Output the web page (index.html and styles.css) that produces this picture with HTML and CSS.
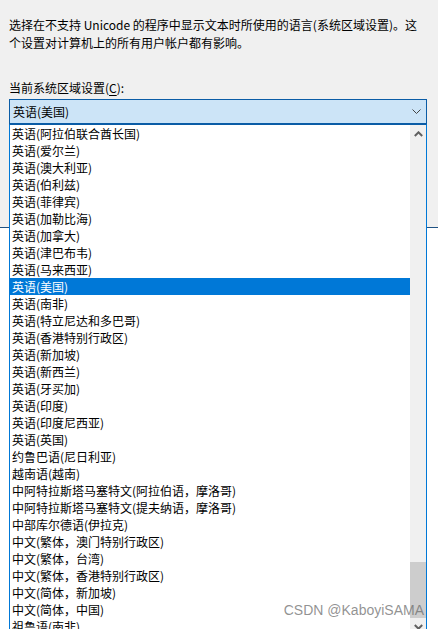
FILE: index.html
```html
<!DOCTYPE html>
<html lang="zh-CN">
<head>
<meta charset="utf-8">
<title>系统区域设置</title>
<link rel="stylesheet" href="styles.css">
</head>
<body>
<div class="page">
  <p class="desc">选择在不支持 Unicode 的程序中显示文本时所使用的语言(系统区域设置)。这<br>个设置对计算机上的所有用户帐户都有影响。</p>
  <div class="label">当前系统区域设置(<u>C</u>):</div>
  <div class="combo">
    <span class="combo-text">英语(美国)</span>
    <svg class="combo-arrow" width="9" height="5" viewBox="0 0 9 5"><path d="M0.5 0.5 L4.5 4.5 L8.5 0.5" fill="none" stroke="#444" stroke-width="1"/></svg>
  </div>
  <div class="list">
    <ul class="items">
      <li>英语(阿拉伯联合酋长国)</li>
      <li>英语(爱尔兰)</li>
      <li>英语(澳大利亚)</li>
      <li>英语(伯利兹)</li>
      <li>英语(菲律宾)</li>
      <li>英语(加勒比海)</li>
      <li>英语(加拿大)</li>
      <li>英语(津巴布韦)</li>
      <li>英语(马来西亚)</li>
      <li class="selected">英语(美国)</li>
      <li>英语(南非)</li>
      <li>英语(特立尼达和多巴哥)</li>
      <li>英语(香港特别行政区)</li>
      <li>英语(新加坡)</li>
      <li>英语(新西兰)</li>
      <li>英语(牙买加)</li>
      <li>英语(印度)</li>
      <li>英语(印度尼西亚)</li>
      <li>英语(英国)</li>
      <li>约鲁巴语(尼日利亚)</li>
      <li>越南语(越南)</li>
      <li>中阿特拉斯塔马塞特文(阿拉伯语，摩洛哥)</li>
      <li>中阿特拉斯塔马塞特文(提夫纳语，摩洛哥)</li>
      <li>中部库尔德语(伊拉克)</li>
      <li>中文(繁体，澳门特别行政区)</li>
      <li>中文(繁体，台湾)</li>
      <li>中文(繁体，香港特别行政区)</li>
      <li>中文(简体，新加坡)</li>
      <li>中文(简体，中国)</li>
      <li>祖鲁语(南非)</li>
    </ul>
    <div class="scrollbar">
      <div class="sb-btn">
        <svg width="9" height="6" viewBox="0 0 9 6"><path d="M0.8 5 L4.5 1.3 L8.2 5" fill="none" stroke="#606060" stroke-width="2"/></svg>
      </div>
      <div class="sb-track"></div>
      <div class="sb-thumb"></div>
      <div class="sb-btn">
        <svg width="9" height="6" viewBox="0 0 9 6"><path d="M0.8 1 L4.5 4.7 L8.2 1" fill="none" stroke="#606060" stroke-width="2"/></svg>
      </div>
    </div>
  </div>
</div>
<div class="watermark">CSDN @KaboyiSAMA</div>
</body>
</html>
```
FILE: styles.css
```css
html, body {
  margin: 0;
  padding: 0;
}
body {
  width: 438px;
  min-height: 629px;
  background: linear-gradient(to bottom, #f0f0f0 0, #f0f0f0 227px, #1f5283 227px, #1f5283 228px, #ffffff 228px);
  font-family: "Noto Sans CJK SC", "Noto Sans", sans-serif;
  font-size: 12px;
  color: #000;
  position: relative;
  overflow: hidden;
}
.page {
  padding: 16px 11px 0 9px;
}
.desc {
  margin: 0;
  line-height: 17.5px;
  white-space: nowrap;
}
.label {
  margin-top: 28px;
  line-height: 18px;
}
.label u {
  text-decoration-thickness: 1px;
  text-underline-offset: 2px;
}
.combo {
  margin-top: 2px;
  height: 23px;
  border: 1px solid #0a5ca6;
  background: #cce4f7;
  display: flex;
  align-items: center;
  justify-content: space-between;
  padding: 0 5px 0 3px;
}
.combo-text {
  line-height: 23px;
}
.combo-arrow {
  display: block;
}
.list {
  border: 1px solid #0078d7;
  border-top-color: #0a5ca6;
  border-bottom: none;
  background: #fff;
  display: flex;
}
.items {
  list-style: none;
  margin: 0;
  padding: 0;
  flex: 1;
}
.items li {
  height: 17px;
  line-height: 17px;
  padding-left: 2px;
  white-space: nowrap;
}
.items li.selected {
  background: #0078d7;
  color: #fff;
}
.scrollbar {
  width: 16px;
  background: #f0f0f0;
  display: flex;
  flex-direction: column;
}
.sb-btn {
  height: 17px;
  display: flex;
  align-items: center;
  justify-content: center;
}
.sb-track {
  flex: 1;
}
.sb-thumb {
  height: 56px;
  background: #cdcdcd;
}
.watermark {
  position: absolute;
  right: 14px;
  top: 601px;
  font-family: "Liberation Sans", Arial, sans-serif;
  font-size: 14px;
  line-height: 18px;
  color: rgba(110, 110, 110, 0.75);
}
```
